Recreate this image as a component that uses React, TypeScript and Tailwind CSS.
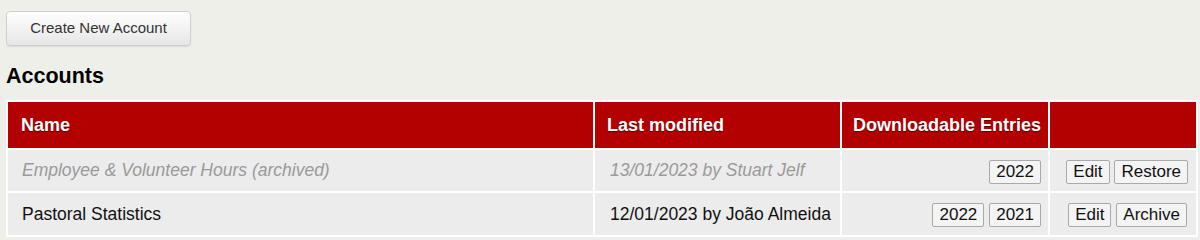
import React from "react";

const btn =
  "inline-block h-[24px] px-[6px] border border-[#a9a9a9] rounded-[2px] bg-[#f4f4f4] text-[17px] leading-[22px] text-[#111] align-middle";

export default function App() {
  return (
    <div
      className="min-h-[240px] w-[1200px] bg-[#efefea] pt-[11px] pl-[6px] pr-[2px]"
      style={{ fontFamily: '"Liberation Sans", Arial, sans-serif' }}
    >
      <button className="h-[35px] w-[185px] rounded-[4px] border border-[#cfcfcf] bg-gradient-to-b from-[#ffffff] to-[#e6e6e6] text-[15px] text-[#333] shadow-[0_1px_1px_rgba(0,0,0,0.08)]">
        Create New Account
      </button>
      <h2 className="mt-[18px] text-[21.5px] font-bold leading-[24px] text-black">
        Accounts
      </h2>
      <table className="mt-[12px] w-[1192px] border-separate border-spacing-[2px] bg-white text-[17.5px] table-fixed">
        <colgroup>
          <col className="w-[585px]" />
          <col className="w-[245px]" />
          <col className="w-[206px]" />
          <col className="w-[146px]" />
        </colgroup>
        <thead>
          <tr className="h-[46px] bg-[#b30000] text-white text-[18px] [text-shadow:0_1px_1px_rgba(60,0,0,0.8)]">
            <th className="text-left font-bold pl-[13px]">Name</th>
            <th className="text-left font-bold pl-[12px]">Last modified</th>
            <th className="text-left font-bold pl-[11px] whitespace-nowrap">Downloadable Entries</th>
            <th></th>
          </tr>
        </thead>
        <tbody>
          <tr className="h-[41px] bg-[#ececec] italic text-[#9a9a9a]">
            <td className="pl-[14px]">Employee &amp; Volunteer Hours (archived)</td>
            <td className="pl-[15px] whitespace-nowrap">13/01/2023 by Stuart Jelf</td>
            <td className="text-right pr-[7px] not-italic">
              <button className={btn}>2022</button>
            </td>
            <td className="text-right pr-[8px] not-italic whitespace-nowrap">
              <button className={btn}>Edit</button>{" "}
              <button className={btn}>Restore</button>
            </td>
          </tr>
          <tr className="h-[42px] bg-[#ececec] text-[#111]">
            <td className="pl-[14px]">Pastoral Statistics</td>
            <td className="pl-[15px] whitespace-nowrap">12/01/2023 by João Almeida</td>
            <td className="text-right pr-[7px] whitespace-nowrap">
              <button className={btn}>2022</button>{" "}
              <button className={btn}>2021</button>
            </td>
            <td className="text-right pr-[9px] whitespace-nowrap">
              <button className={btn}>Edit</button>{" "}
              <button className={btn}>Archive</button>
            </td>
          </tr>
        </tbody>
      </table>
    </div>
  );
}
